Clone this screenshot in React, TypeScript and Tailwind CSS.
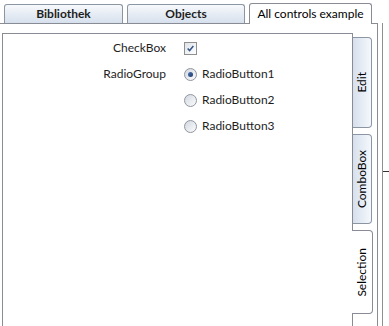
import React from 'react'

const font = { fontFamily: 'Lato, "Open Sans", sans-serif' }

function TopTab({ label, active, width }: { label: string; active?: boolean; width: string }) {
  if (active) {
    return (
      <div
        className={`${width} h-[21px] -mb-px relative z-10 flex items-center justify-center rounded-t-[3px] border border-b-0 border-[#898c95] bg-white text-[12px] text-black`}
      >
        {label}
      </div>
    )
  }
  return (
    <div
      className={`${width} h-[19px] flex items-center justify-center rounded-t-[3px] border border-b-0 border-[#8c96a3] bg-gradient-to-b from-[#f7f9fc] to-[#d6e0ed] text-[12px] font-bold text-[#1e1e1e]`}
    >
      {label}
    </div>
  )
}

function SideTab({ label, active, height }: { label: string; active?: boolean; height: string }) {
  const base = `${height} flex items-center justify-center rounded-r-[4px] border border-l-0`
  return (
    <div
      className={
        active
          ? `${base} w-[21px] -ml-px relative z-10 border-[#898c95] bg-white`
          : `${base} w-[19px] border-[#8c96a3] bg-gradient-to-r from-[#d6e0ed] to-[#f5f8fc]`
      }
    >
      <span className="[writing-mode:vertical-rl] rotate-180 text-[12px] text-black">{label}</span>
    </div>
  )
}

function CheckBox() {
  return (
    <div className="w-[13px] h-[13px] border border-[#8f8f8f] bg-gradient-to-br from-[#dfe3e8] to-[#ffffff] p-px">
      <svg viewBox="0 0 11 11" className="w-full h-full">
        <path d="M2 5.5 L4.4 8 L9 2.5" fill="none" stroke="#31558c" strokeWidth="1.8" />
      </svg>
    </div>
  )
}

function Radio({ checked }: { checked?: boolean }) {
  return (
    <div className="w-[13px] h-[13px] rounded-full border border-[#8f959e] bg-gradient-to-br from-[#d3d8e0] to-[#fbfcfd] flex items-center justify-center">
      {checked && (
        <div className="w-[5px] h-[5px] rounded-full bg-gradient-to-br from-[#4d73b0] to-[#1f3c6e]" />
      )}
    </div>
  )
}

function Row({ label, children }: { label?: string; children: React.ReactNode }) {
  return (
    <div className="h-[26px] flex items-center">
      <div className="w-[164px] text-right pr-[1px]">{label}</div>
      <div className="pl-[17px] flex items-center gap-[5px]">{children}</div>
    </div>
  )
}

export default function App() {
  return (
    <div className="w-[389px] h-[326px] bg-white overflow-hidden flex flex-col relative" style={font}>
      {/* Top tabs */}
      <div className="h-[23px] flex items-end pl-[4px] gap-[4px] w-[377px]">
        <TopTab label="Bibliothek" width="w-[119px]" />
        <TopTab label="Objects" width="w-[118px]" />
        <TopTab label="All controls example" width="w-[123px]" active />
      </div>

      <div className="flex flex-1">
        {/* Outer panel */}
        <div className="w-[378px] border-t border-r border-[#898c95] pt-[9px] pl-[2px] flex">
          {/* Inner page */}
          <div className="w-[351px] border-l border-t border-r border-[#898c95] bg-white pt-[1px] text-[12px] text-[#1e1e1e]">
            <Row label="CheckBox">
              <CheckBox />
            </Row>
            <Row label="RadioGroup">
              <Radio checked />
              <span>RadioButton1</span>
            </Row>
            <Row>
              <Radio />
              <span>RadioButton2</span>
            </Row>
            <Row>
              <Radio />
              <span>RadioButton3</span>
            </Row>
          </div>
          {/* Side tabs */}
          <div className="flex flex-col pt-[4px] gap-[6px]">
            <SideTab label="Edit" height="h-[91px]" />
            <SideTab label="ComboBox" height="h-[90px]" />
            <SideTab label="Selection" height="h-[84px]" active />
          </div>
        </div>
        {/* Right splitter strip */}
        <div className="w-[4px]" />
        <div className="flex-1 border-l border-[#8f8f8f] pt-[148px]">
          <div className="h-px bg-[#333] w-full" />
        </div>
      </div>
    </div>
  )
}
